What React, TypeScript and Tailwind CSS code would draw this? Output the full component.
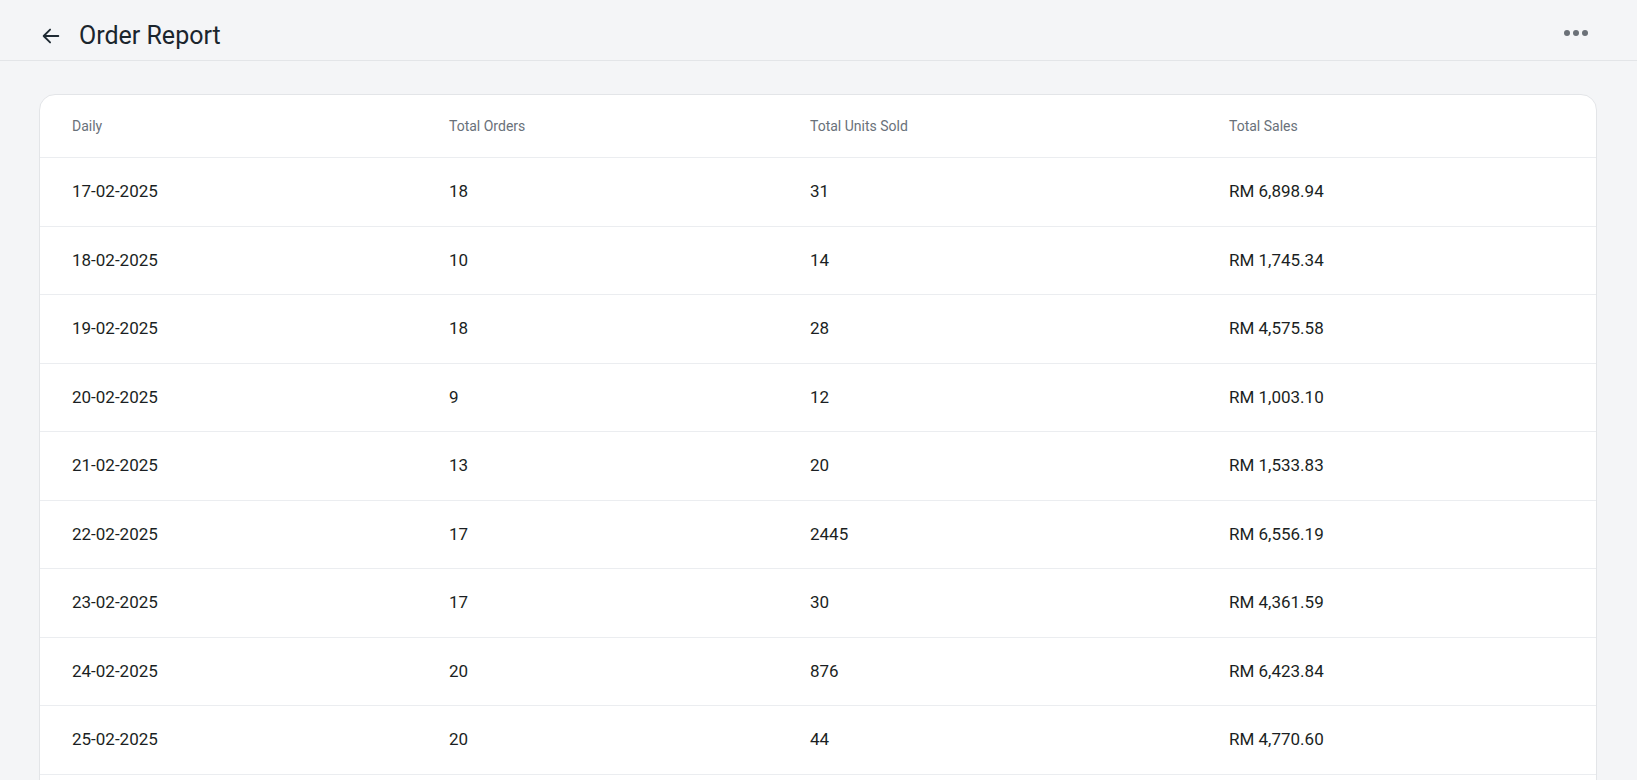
const rows = [
  ["17-02-2025", "18", "31", "RM 6,898.94"],
  ["18-02-2025", "10", "14", "RM 1,745.34"],
  ["19-02-2025", "18", "28", "RM 4,575.58"],
  ["20-02-2025", "9", "12", "RM 1,003.10"],
  ["21-02-2025", "13", "20", "RM 1,533.83"],
  ["22-02-2025", "17", "2445", "RM 6,556.19"],
  ["23-02-2025", "17", "30", "RM 4,361.59"],
  ["24-02-2025", "20", "876", "RM 6,423.84"],
  ["25-02-2025", "20", "44", "RM 4,770.60"],
];
const grid = "grid grid-cols-[377px_361px_419px_1fr] px-8 items-center";
export default function App() {
  return (
    <div className="min-h-screen bg-[#f4f5f7] text-[#1b1f23]" style={{ fontFamily: "Roboto, sans-serif" }}>
      <div className="h-[61px] border-b border-[#e3e5e8] flex items-center pt-[12px] pl-[40px] pr-[49px]">
        <svg width="22" height="22" viewBox="0 0 24 24" fill="none" stroke="#1f2a33" strokeWidth="2" strokeLinecap="round" strokeLinejoin="round"><path d="M20 12H4M11 5l-7 7 7 7" /></svg>
        <div className="ml-[17px] text-[25px] text-[#1b252d]">Order Report</div>
        <div className="ml-auto flex gap-[3px] -mt-[6px]">
          <span className="w-[6px] h-[6px] rounded-full bg-[#6b7178]" />
          <span className="w-[6px] h-[6px] rounded-full bg-[#6b7178]" />
          <span className="w-[6px] h-[6px] rounded-full bg-[#6b7178]" />
        </div>
      </div>
      <div className="pl-[39px] pr-[40px] pt-[33px]">
        <div className="bg-white border border-[#e3e5e8] rounded-[16px] overflow-hidden">
          <div className={grid + " h-[63px] text-[14px] text-[#69717a] border-b border-[#ebedf0]"}>
            <div>Daily</div><div>Total Orders</div><div>Total Units Sold</div><div>Total Sales</div>
          </div>
          {rows.map((r) => (
            <div key={r[0]} className={grid + " h-[68.5px] text-[17px] border-b border-[#ebedf0]"}>
              {r.map((c, i) => <div key={i}>{c}</div>)}
            </div>
          ))}
          <div className="h-[40px]" />
        </div>
      </div>
    </div>
  );
}
